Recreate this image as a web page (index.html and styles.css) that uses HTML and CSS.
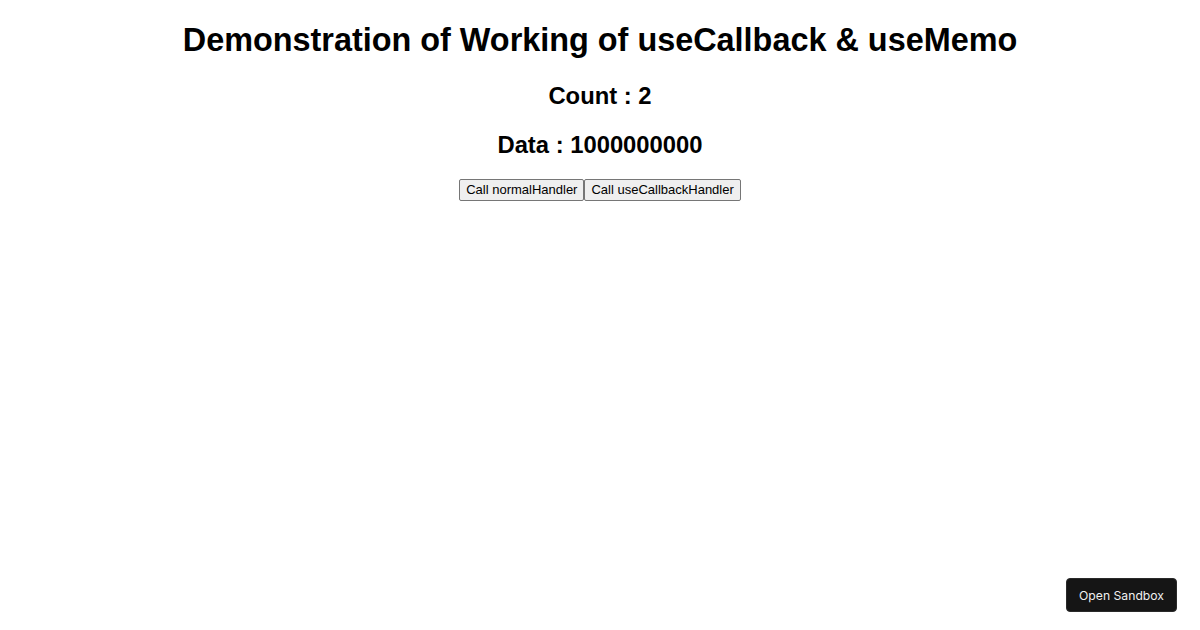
FILE: index.html
```html
<!DOCTYPE html>
<html>
<head>
<meta charset="utf-8">
<link rel="stylesheet" href="styles.css">
</head>
<body>
<div class="app">
  <h1>Demonstration of Working of useCallback &amp; useMemo</h1>
  <h2>Count : 2</h2>
  <h2>Data : 1000000000</h2>
  <div class="actions">
    <button class="btn">Call normalHandler</button><button class="btn">Call useCallbackHandler</button>
  </div>
</div>
<a class="open-sandbox">Open Sandbox</a>
</body>
</html>
```
FILE: styles.css
```css
body {
  margin: 0 8px;
  background: #fff;
  font-family: "Liberation Sans", Arial, sans-serif;
  color: #000;
}
.app {
  text-align: center;
  padding-top: 0.1px;
}
h1 {
  font-size: 32.4px;
  margin: 22px 0 22.6px;
}
h2 {
  font-size: 23.8px;
  margin: 21.6px 0 19.6px;
}
.btn {
  font-family: "Liberation Sans", Arial, sans-serif;
  font-size: 13px;
  line-height: 16px;
  padding: 2px 6px;
  border: 1px solid #767676;
  border-radius: 2px;
  background: #efefef;
  color: #000;
  margin: 0;
}
.open-sandbox {
  position: fixed;
  right: 23px;
  bottom: 18px;
  background: #151515;
  color: #f0f0f0;
  font-family: Inter, "Liberation Sans", sans-serif;
  font-size: 12.2px;
  padding: 0 12px;
  height: 34px;
  line-height: 34px;
  border-radius: 4px;
  border: 1px solid #2a2a2a;
  box-sizing: border-box;
}
```
